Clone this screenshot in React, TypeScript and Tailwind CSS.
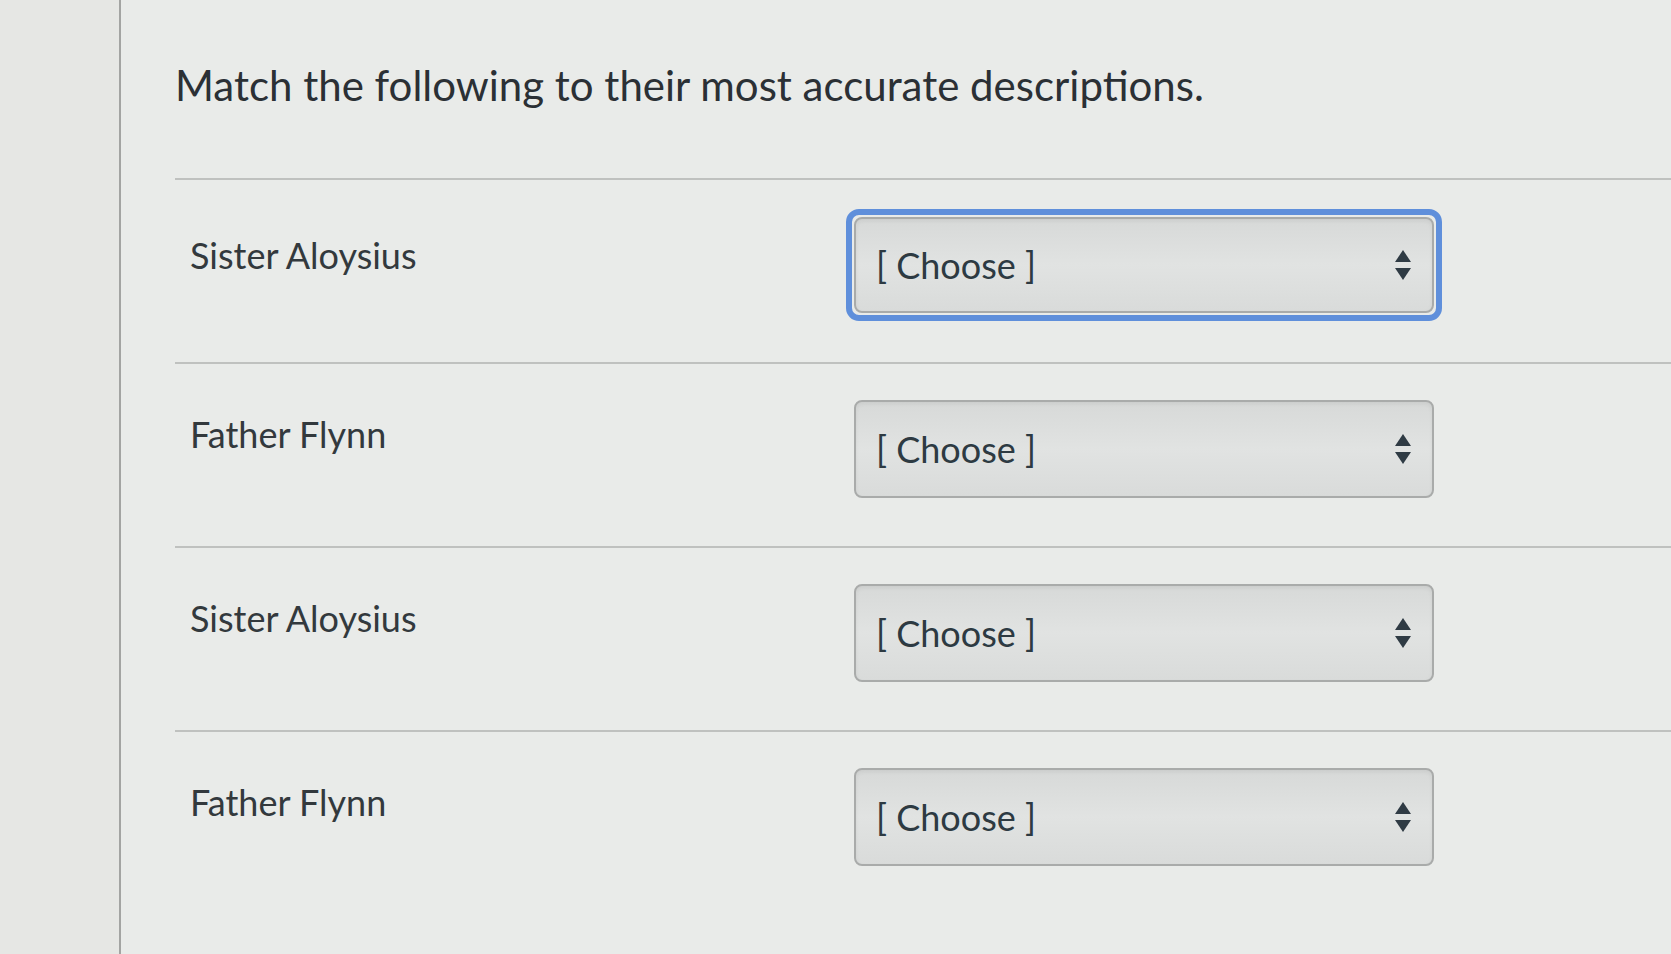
const rows = [
  { label: "Sister Aloysius", focused: true },
  { label: "Father Flynn", focused: false },
  { label: "Sister Aloysius", focused: false },
  { label: "Father Flynn", focused: false },
];

function SortArrows() {
  return (
    <svg width="18" height="32" viewBox="0 0 18 32" className="text-[#2f3b44]">
      <path d="M9 1 L17 13 L1 13 Z" fill="currentColor" />
      <path d="M9 31 L17 19 L1 19 Z" fill="currentColor" />
    </svg>
  );
}

function ChooseSelect({ focused }: { focused: boolean }) {
  return (
    <div
      className={
        focused
          ? "w-[596px] h-[112px] rounded-[13px] border-[6px] border-[#5f8fdb] p-[2px] -ml-[8px]"
          : "w-[580px] h-[98px]"
      }
    >
      <div className="h-full flex items-center justify-between rounded-[8px] border-2 border-[#a9abaa] bg-gradient-to-b from-[#d7d9d8] via-[#e1e3e2] to-[#d9dbda] pl-[20px] pr-[20px] shadow-[inset_0_2px_4px_rgba(0,0,0,0.06)]">
        <span className="text-[36px] text-[#2d3a42]">[ Choose ]</span>
        <SortArrows />
      </div>
    </div>
  );
}

export default function App() {
  return (
    <main
      className="min-h-[954px] w-full flex bg-[#e9ebe9] text-[#2d3a42] overflow-hidden"
      style={{ fontFamily: "Lato, 'Open Sans', sans-serif" }}
    >
      {/* Left nav strip */}
      <aside className="w-[121px] shrink-0 bg-[#e6e7e4] border-r-2 border-[#a3a4a2]" />

      <section className="flex-1 pl-[54px] pt-[54px]">
        <h1 className="text-[42px] leading-[62px] font-normal text-[#2b3035]">
          Match the following to their most accurate descriptions.
        </h1>

        <div className="mt-[62px] border-t-2 border-[#bfc1bf]">
          {rows.map((row, i) => (
            <div
              key={i}
              className="h-[184px] flex items-start border-b-2 border-[#bfc1bf] last:border-b-0"
            >
              <div
                className={
                  "w-[679px] shrink-0 pl-[15px] text-[36px] text-[#33393d] " +
                  (row.focused ? "pt-[48px]" : "pt-[43px]")
                }
              >
                {row.label}
              </div>
              <div className={row.focused ? "pt-[29px]" : "pt-[36px]"}>
                <ChooseSelect focused={row.focused} />
              </div>
            </div>
          ))}
        </div>
      </section>
    </main>
  );
}
